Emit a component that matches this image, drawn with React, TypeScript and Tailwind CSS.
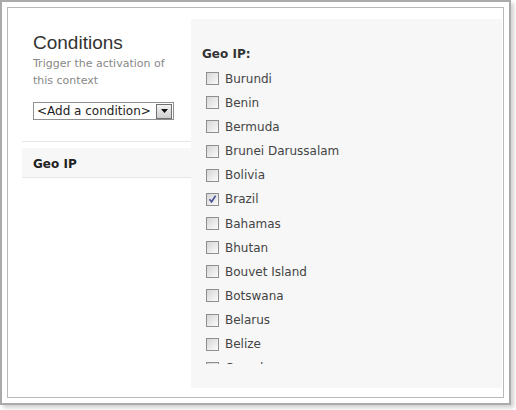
const countries = [
  'Burundi', 'Benin', 'Bermuda', 'Brunei Darussalam', 'Bolivia', 'Brazil', 'Bahamas',
  'Bhutan', 'Bouvet Island', 'Botswana', 'Belarus', 'Belize', 'Canada',
]
const checked = new Set(['Brazil'])

// Box drawn by hand so it keeps the old grey gradient look of the screenshot.
function CheckBox({ on }: { on: boolean }) {
  return (
    <span className="relative inline-block w-[13px] h-[13px] shrink-0 border border-[#8e8f8f] bg-gradient-to-br from-[#d6d6d6] to-[#fbfbfb]">
      {on && (
        <svg viewBox="0 0 11 11" className="absolute inset-0 w-[11px] h-[11px]">
          <path d="M2.5 5.2 L4.6 7.8 L8.6 1.8" fill="none" stroke="#4a5596" strokeWidth="1.7" />
        </svg>
      )}
    </span>
  )
}

export default function App() {
  return (
    <div className="w-[516px] h-[410px] bg-white font-['DejaVu_Sans',sans-serif]">
      <div className="w-[511px] h-[405px] border-2 border-[#ababab] bg-white p-[5px] shadow-[3px_3px_4px_rgba(0,0,0,0.18)]">
        <div className="flex h-full border border-[#b9b9b9] pt-[11px] pb-[9px] pl-[14px] pr-px">
          <aside className="w-[169px] shrink-0">
            <div className="px-[11px] pt-[13px]">
              <h1 className="font-['Liberation_Sans',sans-serif] text-[19px] leading-[22px] text-[#333]">Conditions</h1>
              <p className="mt-px text-[11px] leading-[17px] text-[#888] pr-2">Trigger the activation of this context</p>
              <div className="mt-[13px] flex h-[18px] w-[141px] items-center border border-[#8f8f8f] bg-white">
                <span className="flex-1 pl-[3px] text-[12px] leading-[16px] text-[#222] whitespace-nowrap">&lt;Add a condition&gt;</span>
                <span className="mr-px flex h-[15px] w-[16px] items-center justify-center border border-[#707070] bg-gradient-to-b from-[#f2f2f2] to-[#cfcfcf]">
                  <svg viewBox="0 0 7 4" className="w-[7px] h-[4px]">
                    <path d="M0 0 H7 L3.5 4 Z" fill="#111" />
                  </svg>
                </span>
              </div>
            </div>
            <div className="mt-[21px] border-t border-[#e6e6e6]" />
            <div className="mt-[6px] border-b border-[#e6e6e6] bg-[#f7f7f7] px-[11px] pt-[9px] pb-[5px] text-[12px] leading-[15px] font-bold text-[#222]">
              Geo IP
            </div>
          </aside>
          <section className="flex-1 bg-[#f7f7f7] pl-[11px] pt-[27.5px]">
            <h2 className="text-[12px] leading-[15px] font-bold text-[#333]">Geo IP:</h2>
            <ul className="mt-[5px] h-[297.5px] overflow-hidden">
              {countries.map((c) => (
                <li key={c} className="flex h-[24.17px] items-center gap-[6px] pl-[4px] text-[12px] text-[#444]">
                  <CheckBox on={checked.has(c)} />
                  <span>{c}</span>
                </li>
              ))}
            </ul>
          </section>
        </div>
      </div>
    </div>
  )
}
